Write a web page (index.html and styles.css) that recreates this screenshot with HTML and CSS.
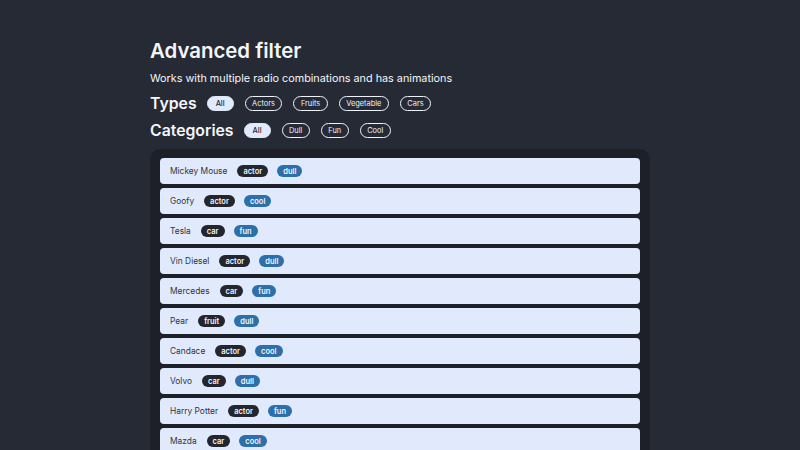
FILE: index.html
```html
<!DOCTYPE html>
<html>
<head>
<meta charset="utf-8">
<link rel="stylesheet" href="styles.css">
</head>
<body>
<main class="wrap">
  <h1 class="title">Advanced filter</h1>
  <p class="sub">Works with multiple radio combinations and has animations</p>
  <div class="filter-row">
    <h2 class="label">Types</h2>
    <span class="chip active">All</span>
    <span class="chip">Actors</span>
    <span class="chip">Fruits</span>
    <span class="chip">Vegetable</span>
    <span class="chip">Cars</span>
  </div>
  <div class="filter-row">
    <h2 class="label">Categories</h2>
    <span class="chip active">All</span>
    <span class="chip">Dull</span>
    <span class="chip">Fun</span>
    <span class="chip">Cool</span>
  </div>
  <ul class="list">
    <li class="item"><span class="name">Mickey Mouse</span><span class="tag type">actor</span><span class="tag cat">dull</span></li>
    <li class="item"><span class="name">Goofy</span><span class="tag type">actor</span><span class="tag cat">cool</span></li>
    <li class="item"><span class="name">Tesla</span><span class="tag type">car</span><span class="tag cat">fun</span></li>
    <li class="item"><span class="name">Vin Diesel</span><span class="tag type">actor</span><span class="tag cat">dull</span></li>
    <li class="item"><span class="name">Mercedes</span><span class="tag type">car</span><span class="tag cat">fun</span></li>
    <li class="item"><span class="name">Pear</span><span class="tag type">fruit</span><span class="tag cat">dull</span></li>
    <li class="item"><span class="name">Candace</span><span class="tag type">actor</span><span class="tag cat">cool</span></li>
    <li class="item"><span class="name">Volvo</span><span class="tag type">car</span><span class="tag cat">dull</span></li>
    <li class="item"><span class="name">Harry Potter</span><span class="tag type">actor</span><span class="tag cat">fun</span></li>
    <li class="item"><span class="name">Mazda</span><span class="tag type">car</span><span class="tag cat">cool</span></li>
  </ul>
</main>
</body>
</html>
```
FILE: styles.css
```css
* { box-sizing: border-box; }
html, body { margin: 0; padding: 0; }
body {
  background: #262a34;
  color: #f4f6fb;
  font-family: "Inter", "Open Sans", sans-serif;
  height: 450px;
  overflow: hidden;
}
.wrap {
  width: 500px;
  margin: 0 auto;
  padding-top: 36px;
}
.title {
  margin: 0;
  font-size: 20.4px;
  font-weight: 600;
  line-height: 30px;
}
.sub {
  margin: 5px 0 0;
  font-size: 10.8px;
  line-height: 16px;
}
.filter-row {
  display: flex;
  align-items: center;
  gap: 11px;
  margin-top: 3px;
  height: 26px;
}
.filter-row + .filter-row { margin-top: 1px; }
.label {
  margin: 0 -1px 0 0;
  font-size: 15.8px;
  font-weight: 600;
}
.label-types { letter-spacing: -0.3px; }
.chip {
  display: inline-flex;
  align-items: center;
  height: 15px;
  padding: 0 6.5px;
  border: 1.5px solid #eef2fb;
  border-radius: 999px;
  font-size: 7.4px;
  color: #eef2fb;
}
.chip.active {
  padding: 0 8px;
  background: #e1eafc;
  color: #252833;
  border-color: #e1eafc;
  font-weight: 500;
}
.list {
  list-style: none;
  margin: 6px 0 0;
  padding: 9px 10px;
  background: #1d2028;
  border-radius: 10px;
  display: flex;
  flex-direction: column;
  gap: 4px;
}
.item {
  display: flex;
  align-items: center;
  gap: 9px;
  height: 26px;
  padding: 0 10px;
  background: #e1eafc;
  border-radius: 4px;
  color: #30333c;
  font-size: 8.4px;
}
.name { margin-right: 1px; }
.tag {
  display: inline-flex;
  align-items: center;
  height: 12px;
  padding: 0 6px;
  border-radius: 999px;
  font-size: 7.5px;
  font-weight: 600;
  color: #f2f5fb;
}
.tag.type { background: #23262f; }
.tag.cat { background: #2d6fa8; }
```
